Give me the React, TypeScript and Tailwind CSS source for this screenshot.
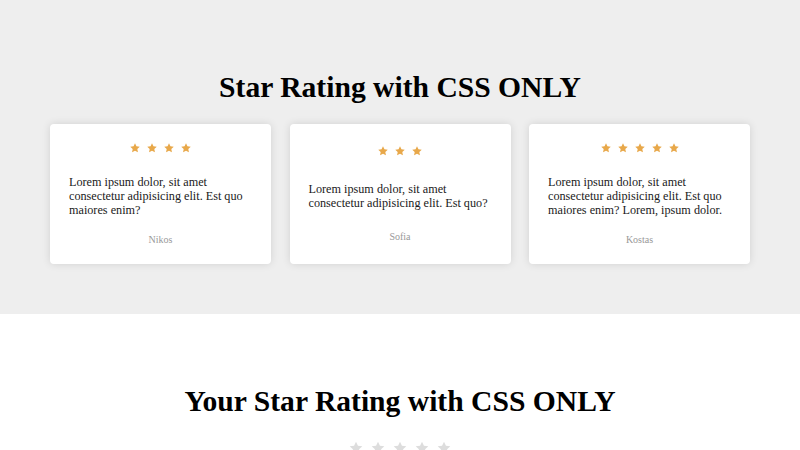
import React from "react";

const reviews = [
  { stars: 4, text: "Lorem ipsum dolor, sit amet consectetur adipisicing elit. Est quo maiores enim?", name: "Nikos" },
  { stars: 3, text: "Lorem ipsum dolor, sit amet consectetur adipisicing elit. Est quo?", name: "Sofia" },
  { stars: 5, text: "Lorem ipsum dolor, sit amet consectetur adipisicing elit. Est quo maiores enim? Lorem, ipsum dolor.", name: "Kostas" },
];

const Star = ({ className }: { className: string }) => (
  <svg viewBox="0 0 24 24" className={className} fill="currentColor">
    <path d="M12 2.5l2.9 6.1 6.6.8-4.9 4.6 1.3 6.6L12 17.3l-5.9 3.3 1.3-6.6-4.9-4.6 6.6-.8z" />
  </svg>
);

const App = () => {
  return (
    <div className="w-full min-h-screen bg-white font-['Liberation_Serif',serif] text-black">
      <section className="bg-[#eeeeee] pt-[69px] pb-[50px]">
        <h1 className="text-center text-[29.6px] font-bold leading-[36px]">
          Star Rating with CSS ONLY
        </h1>
        <div className="mt-[19px] flex justify-center gap-[18.5px]">
          {reviews.map((r) => (
            <div
              key={r.name}
              className="w-[221px] h-[140px] bg-white rounded-[4px] shadow-[0_0_8px_rgba(0,0,0,0.12)] px-[19px] flex flex-col justify-evenly"
            >
              <div className="flex justify-center gap-[5px] text-[#e8a84a]">
                {Array.from({ length: r.stars }).map((_, i) => (
                  <Star key={i} className="w-[12px] h-[12px]" />
                ))}
              </div>
              <p className="pt-[3px] text-[12.2px] leading-[14px] text-[#1a1a1a]">{r.text}</p>
              <div className="text-center text-[10px] leading-[12px] text-[#999]">{r.name}</div>
            </div>
          ))}
        </div>
      </section>
      <section className="pt-[69px] pb-10">
        <h2 className="text-center text-[29.6px] font-bold leading-[36px]">
          Your Star Rating with CSS ONLY
        </h2>
        <div className="mt-[21px] flex justify-center gap-[6px] text-[#dddddd]">
          {Array.from({ length: 5 }).map((_, i) => (
            <Star key={i} className="w-[16px] h-[16px]" />
          ))}
        </div>
      </section>
    </div>
  );
};

export default App;
